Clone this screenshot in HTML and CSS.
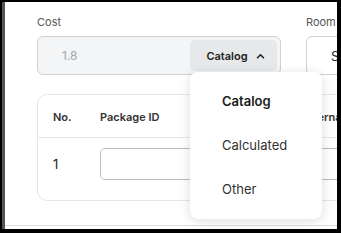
FILE: index.html
```html
<!DOCTYPE html>
<html lang="en">
<head>
    <meta charset="UTF-8">
    <title>Cost</title>
    <link rel="stylesheet" href="styles.css">
</head>
<body>
    <div class="page">
        <div class="fields">
            <div class="field cost">
                <label>Cost</label>
                <div class="input disabled">
                    <span class="value">1.8</span>
                    <button class="source-btn">Catalog
                        <svg width="9" height="6" viewBox="0 0 9 6"><path d="M1.5 4.8 L4.5 1.8 L7.5 4.8" fill="none" stroke="#222" stroke-width="1.6" stroke-linecap="round" stroke-linejoin="round"/></svg>
                    </button>
                </div>
                <ul class="menu">
                    <li class="active">Catalog</li>
                    <li>Calculated</li>
                    <li>Other</li>
                </ul>
            </div>
            <div class="field room">
                <label>Room</label>
                <div class="input"><span class="value dark">S</span></div>
            </div>
        </div>
        <div class="card">
            <div class="row head">
                <div class="col-no">No.</div>
                <div class="col-pkg">Package ID</div>
                <div class="col-int">Internal</div>
            </div>
            <div class="row body">
                <div class="col-no">1</div>
                <div class="col-pkg"><div class="cell-input"></div></div>
                <div class="col-int"><div class="cell-input"></div></div>
            </div>
        </div>
        <div class="footer-line"></div>
    </div>
</body>
</html>
```

FILE: styles.css
```css
html, body {
    margin: 0;
    padding: 0;
    background: #000;
    overflow: hidden;
}
body {
    font-family: Inter, "Noto Sans", sans-serif;
    color: #222;
}
.page {
    margin: 2px 0 0 2px;
    width: 332px;
    height: 227px;
    border-left: 3px solid #555;
    background: #fff;
    overflow: hidden;
    position: relative;
}
.fields {
    display: flex;
    gap: 25px;
    padding: 14px 0 0 32px;
    width: 400px;
}
.field {
    position: relative;
    flex-shrink: 0;
}
.field label {
    display: block;
    font-size: 11px;
    color: #555;
    height: 13px;
    line-height: 13px;
    margin-bottom: 7px;
}
.cost .input {
    width: 242px;
}
.room .input {
    width: 120px;
}
.input {
    height: 37px;
    border: 1px solid #cfd1d4;
    border-radius: 6px;
    background: #fff;
    display: flex;
    align-items: center;
}
.input.disabled {
    background: #f4f5f6;
}
.value {
    font-size: 12px;
    color: #a4a6a9;
    padding-left: 24px;
    flex: 1;
}
.value.dark {
    color: #222;
    font-size: 13px;
}
.source-btn {
    height: 31px;
    width: 87px;
    margin-right: 3px;
    border: none;
    border-radius: 5px;
    background: #e6e8ea;
    font-family: inherit;
    font-size: 11px;
    font-weight: 600;
    color: #222;
    display: flex;
    align-items: center;
    justify-content: center;
    gap: 8px;
    padding: 0 0 0 4px;
}
.menu {
    position: absolute;
    left: 153px;
    top: 56px;
    width: 132px;
    margin: 0;
    padding: 7px 0 8px 0;
    list-style: none;
    background: #fff;
    border-radius: 8px;
    box-shadow: 0 2px 12px rgba(0, 0, 0, 0.14);
    z-index: 2;
}
.menu li {
    height: 44px;
    line-height: 44px;
    padding-left: 32px;
    font-size: 13px;
    color: #333;
}
.menu li.active {
    font-weight: 600;
    color: #1a1a1a;
}
.card {
    margin: 19px 0 0 32px;
    width: 340px;
    border: 1px solid #e6e7e9;
    border-radius: 10px;
    height: 105px;
}
.row {
    display: flex;
    align-items: center;
}
.row > div {
    flex-shrink: 0;
}
.row.head {
    height: 42px;
    border-bottom: 1px solid #e6e7e9;
    font-size: 11px;
    font-weight: 600;
    color: #333;
}
.row.head > div {
    padding-top: 2px;
}
.row.body {
    padding-top: 10px;
    font-size: 13px;
}
.col-no {
    width: 47px;
    padding-left: 15px;
}
.col-pkg {
    width: 204px;
}
.col-int {
    width: 120px;
}
.cell-input {
    height: 30px;
    border: 1px solid #b9bcc0;
    border-radius: 5px;
    margin-right: 6px;
}
.footer-line {
    position: absolute;
    left: 0;
    right: 0;
    top: 223px;
    border-top: 1px solid #dcdde0;
}
```
